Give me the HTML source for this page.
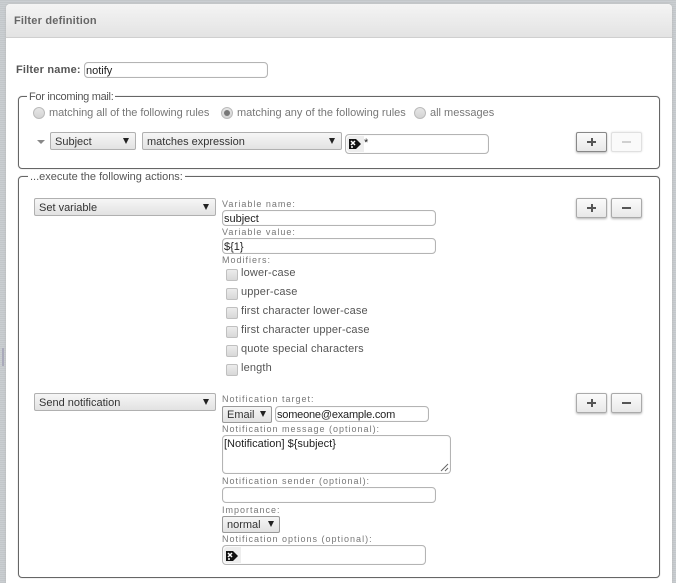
<!DOCTYPE html>
<html><head><meta charset="utf-8">
<style>
html,body{margin:0;padding:0}
body{width:676px;height:583px;position:relative;overflow:hidden;background:repeating-linear-gradient(0deg,#c3c7ca 0 1px,#cbcfd2 1px 2px);font-family:"Liberation Sans",sans-serif;font-size:11px;color:#333}
#panel{position:absolute;left:6px;top:4px;width:666px;height:579px;background:#fff;border-radius:4px 4px 0 0;box-shadow:0 0 2px #b5b5b5}
#head{position:absolute;left:6px;top:4px;width:666px;height:33px;background:linear-gradient(#f4f4f4,#e3e3e3);border-bottom:1px solid #cfcfcf;border-radius:4px 4px 0 0}
.t{position:absolute;white-space:nowrap;line-height:13px}
.fs{position:absolute;border:1px solid #666;border-radius:4px;box-sizing:border-box;box-shadow:0 0 1px #aaa}
.leg{position:absolute;background:#fff;padding:0 2px;color:#555;font-size:11px;line-height:13px;white-space:nowrap}
.in{position:absolute;box-sizing:border-box;border:1px solid #b4b4b4;border-radius:4px;background:#fff;color:#222;font-size:11px;line-height:14px;padding:1px 0 0 1px;white-space:nowrap;box-shadow:inset 0 0 1px #ddd}
.sel{position:absolute;box-sizing:border-box;border:1px solid #b0b0b0;border-radius:2px;background:linear-gradient(#f6f6f6,#e2e2e2);color:#333;font-size:11px;line-height:18px;padding-left:4px;white-space:nowrap}
.sel i{position:absolute;right:6px;top:5px;width:0;height:0;border-left:3.5px solid transparent;border-right:3.5px solid transparent;border-top:6px solid #222}
.lab{position:absolute;font-size:9px;letter-spacing:1px;color:#777;line-height:11px;white-space:nowrap}
.btn{position:absolute;box-sizing:border-box;width:31px;height:20px;border:1px solid #aaa;border-radius:2px;background:linear-gradient(#fbfbfb,#e8e8e8);box-shadow:0 1px 2px #b5b5b5}
.btn:before,.btn b{content:"";position:absolute;background:#555}
.btn:before{left:10px;top:8px;width:9px;height:2px}
.btn.p b{left:13.5px;top:5px;width:2px;height:8px}
.btn.d{border-color:#e0e0e0;box-shadow:0 0 2px #e0e0e0;background:#fafafa}
.btn.d:before{background:#d0d0d0}
.r{position:absolute;width:12px;height:12px;box-sizing:border-box;border:1px solid #bbb;border-radius:50%;background:linear-gradient(#e6e6e6,#d4d4d4)}
.r.on:after{content:"";position:absolute;left:2px;top:2px;width:6px;height:6px;border-radius:50%;background:#777}
.c{position:absolute;left:226px;width:12px;height:12px;box-sizing:border-box;border:1px solid #c0c0c0;border-radius:2px;background:linear-gradient(#ececec,#d8d8d8)}
.cl{position:absolute;left:241px;font-size:11px;color:#555;line-height:13px;white-space:nowrap;letter-spacing:.15px}
.ic{position:absolute;width:17px;background:#eee;border-radius:3px 0 0 3px}
</style></head>
<body>
<div style="position:absolute;left:2px;top:348px;width:2px;height:18px;background:#aab"></div>
<div id="panel"></div>
<div id="head"></div>
<div class="t" style="left:14px;top:15px;font-weight:bold;font-size:11px;color:#666;letter-spacing:.2px">Filter definition</div>
<div class="t" style="left:16px;top:64px;font-weight:bold;color:#555;letter-spacing:.2px">Filter name:</div>
<div class="in" style="left:84px;top:62px;width:184px;height:16px">notify</div>

<div class="fs" style="left:18px;top:96px;width:642px;height:73px"></div>
<div class="leg" style="left:27px;top:91px;letter-spacing:-.3px">For incoming mail:</div>
<div class="r" style="left:33px;top:107px"></div>
<div class="t" style="left:49px;top:107px;color:#777;letter-spacing:-.05px">matching all of the following rules</div>
<div class="r on" style="left:221px;top:107px"></div>
<div class="t" style="left:237px;top:107px;color:#777">matching any of the following rules</div>
<div class="r" style="left:414px;top:107px"></div>
<div class="t" style="left:430px;top:107px;color:#777">all messages</div>
<div style="position:absolute;left:37px;top:140px;width:0;height:0;border:4px solid transparent;border-top:4px solid #888;border-bottom:0"></div>
<div class="sel" style="left:50px;top:132px;width:86px;height:18px">Subject<i></i></div>
<div class="sel" style="left:142px;top:132px;width:200px;height:18px">matches expression<i></i></div>
<div class="in" style="left:345px;top:134px;width:144px;height:20px;padding:0;line-height:16px"><span class="ic" style="left:1px;top:1px;height:16px"></span><span style="position:absolute;left:18px;top:0">*</span>
<svg style="position:absolute;left:3px;top:4px" width="12" height="10" viewBox="0 0 12 10"><path d="M0 0H7L12 5L7 10H0Z" fill="#111"/><path d="M2 2L6 6M6 2L2 6M2 8L4 8" stroke="#fff" stroke-width="1.500"/></svg></div>
<div class="btn p" style="left:576px;top:132px;border-color:#888"><b></b></div>
<div class="btn d" style="left:611px;top:132px"></div>

<div class="fs" style="left:18px;top:176px;width:642px;height:402px"></div>
<div class="leg" style="left:28px;top:171px">...execute the following actions:</div>

<div class="sel" style="left:34px;top:198px;width:182px;height:18px">Set variable<i></i></div>
<div class="lab" style="left:222px;top:199px">Variable name:</div>
<div class="in" style="left:222px;top:210px;width:214px;height:16px">subject</div>
<div class="lab" style="left:222px;top:227px">Variable value:</div>
<div class="in" style="left:222px;top:238px;width:214px;height:16px">${1}</div>
<div class="lab" style="left:222px;top:255px">Modifiers:</div>
<div class="c" style="top:269px"></div><div class="cl" style="top:267px">lower-case</div>
<div class="c" style="top:288px"></div><div class="cl" style="top:286px">upper-case</div>
<div class="c" style="top:307px"></div><div class="cl" style="top:305px">first character lower-case</div>
<div class="c" style="top:326px"></div><div class="cl" style="top:324px">first character upper-case</div>
<div class="c" style="top:345px"></div><div class="cl" style="top:343px">quote special characters</div>
<div class="c" style="top:364px"></div><div class="cl" style="top:362px">length</div>
<div class="btn p" style="left:576px;top:198px"><b></b></div>
<div class="btn" style="left:611px;top:198px"></div>

<div class="sel" style="left:34px;top:393px;width:182px;height:18px">Send notification<i></i></div>
<div class="lab" style="left:222px;top:394px">Notification target:</div>
<div class="sel" style="left:222px;top:406px;width:50px;height:17px;border-color:#999;line-height:17px">Email<i style="right:5px;top:4px"></i></div>
<div class="in" style="left:275px;top:406px;width:154px;height:16px;letter-spacing:-.2px">someone@example.com</div>
<div class="lab" style="left:222px;top:424px">Notification message (optional):</div>
<div class="in" style="left:222px;top:435px;width:229px;height:39px">[Notification] ${subject}
<svg style="position:absolute;right:1px;bottom:1px" width="9" height="9"><path d="M1 8L8 1M5 8L8 5" stroke="#666" stroke-width="1"/></svg></div>
<div class="lab" style="left:222px;top:476px">Notification sender (optional):</div>
<div class="in" style="left:222px;top:487px;width:214px;height:16px"></div>
<div class="lab" style="left:222px;top:505px">Importance:</div>
<div class="sel" style="left:222px;top:516px;width:58px;height:17px;border-color:#999;line-height:17px">normal<i style="right:5px;top:4px"></i></div>
<div class="lab" style="left:222px;top:534px">Notification options (optional):</div>
<div class="in" style="left:222px;top:545px;width:204px;height:20px"><span class="ic" style="left:1px;top:1px;height:16px"></span>
<svg style="position:absolute;left:3px;top:5px" width="12" height="10" viewBox="0 0 12 10"><path d="M0 0H7L12 5L7 10H0Z" fill="#111"/><path d="M2 2L6 6M6 2L2 6M2 8L4 8" stroke="#fff" stroke-width="1.500"/></svg></div>
<div class="btn p" style="left:576px;top:393px"><b></b></div>
<div class="btn" style="left:611px;top:393px"></div>
</body></html>
